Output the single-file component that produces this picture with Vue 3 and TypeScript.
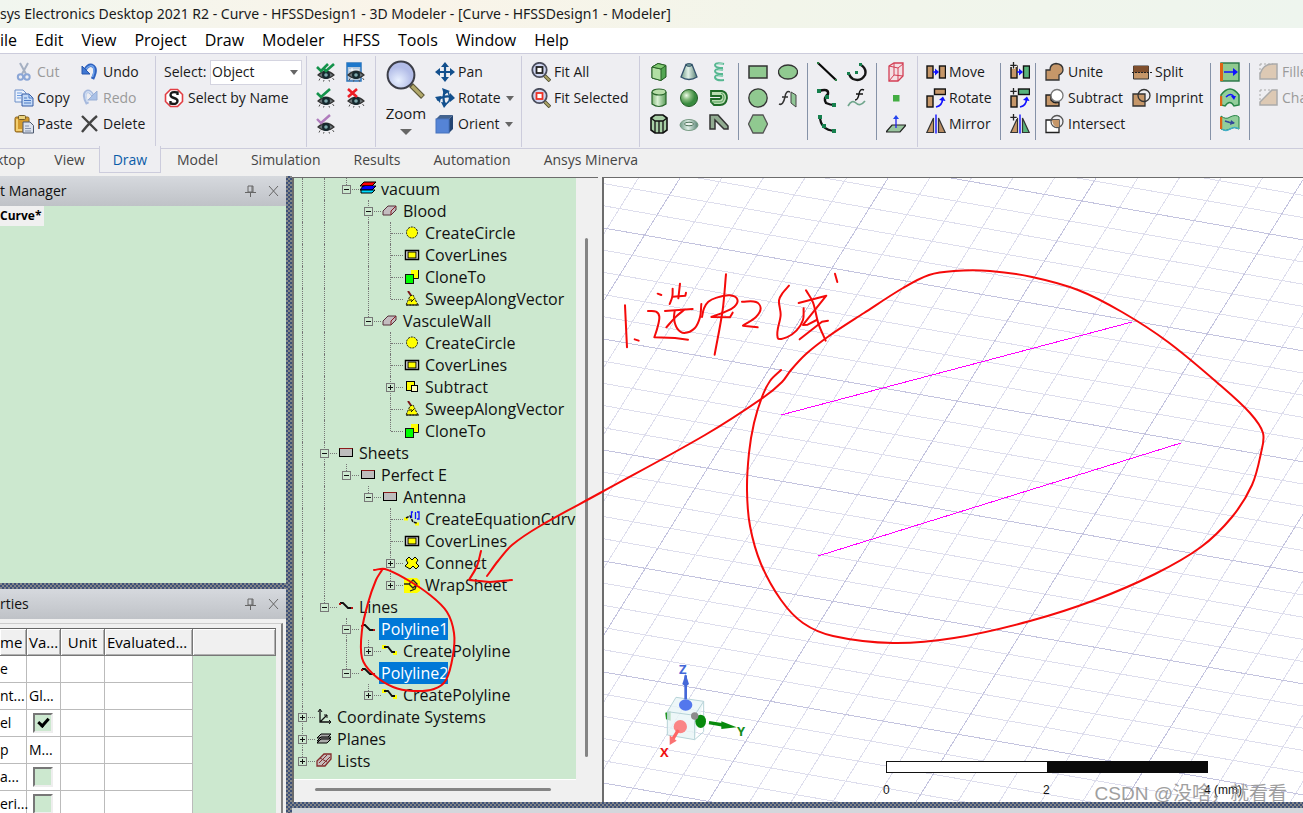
<script setup lang="ts">
type Pt = [number, number]

const menus: string[] = ['ile', 'Edit', 'View', 'Project', 'Draw', 'Modeler', 'HFSS', 'Tools', 'Window', 'Help']
const tabs: string[] = ['ktop', 'View', 'Draw', 'Model', 'Simulation', 'Results', 'Automation', 'Ansys Minerva']

const eye = '<path d="M2 13Q10 5.500 18 13Q10 20 2 13Z" fill="#6c7478" stroke="#333" stroke-width="1.200"/><circle cx="10" cy="13" r="4" fill="#16282e"/><circle cx="10" cy="13" r="1.800" fill="#7fa9ad"/><path d="M4 16.500L3 18.500M8 18L7.500 19.500M13 18L13.500 19.500M16.500 16L18 18" stroke="#555"/>'
const lens = (c: string) => `<path d="M13 13L19 19" stroke="#4d4a2c" stroke-width="3.600"/><path d="M13 13L18.500 18.500" stroke="#aca468" stroke-width="1.800"/><circle cx="8.500" cy="8" r="7.200" fill="#cfd6f2" stroke="#4a4d5c" stroke-width="1.800"/><rect x="5.500" y="5" width="6" height="6" fill="#fff" stroke="${c}" stroke-width="1.800"/>`
const move = (c: string) => `<rect x="1" y="4" width="6" height="12" fill="#c69769" stroke="#111" stroke-width="1.400"/><rect x="13.500" y="4" width="6" height="12" fill="${c}" stroke="#111" stroke-width="1.400"/><path d="M7 10H11" stroke="#11f" stroke-width="1.500"/><path d="M9 6.500L13 10L9 13.500Z" fill="#11f"/>`
const rot = (c: string) => `<rect x="1" y="8" width="6" height="11" fill="#c69769" stroke="#111" stroke-width="1.400"/><rect x="8.500" y="1" width="11" height="5.500" fill="${c}" stroke="#111" stroke-width="1.400"/><path d="M10 19Q16.500 17.500 16.500 11" fill="none" stroke="#11f" stroke-width="1.700"/><path d="M13 12L17 8.500L19.500 13Z" fill="#11f"/>`
const mir = (c: string) => `<path d="M7.500 4V18.500H.8Z" fill="#c69769" stroke="#333" stroke-width="1.200"/><path d="M12.500 4V18.500H19.200Z" fill="${c}" stroke="#333" stroke-width="1.200"/><path d="M10 .5V19.500" stroke="#11f" stroke-width="1.400"/>`
const plus = '<path d="M3.500 0V7M0 3.500H7" stroke="#eeeef2" stroke-width="3"/><path d="M3.500 0V6.500M.3 3.300H6.700" stroke="#222" stroke-width="1.300"/>'

const icons: Record<string, string> = {
  cut: '<path d="M6 1L12 12M14 1L8 12" stroke="#a5b0c2" stroke-width="2"/><circle cx="6.500" cy="15" r="2.700" fill="none" stroke="#8ba6d6" stroke-width="2"/><circle cx="13" cy="15" r="2.700" fill="none" stroke="#8ba6d6" stroke-width="2"/>',
  copy: '<path d="M1 2H9L12 5V14H1Z" fill="#eaf1fc" stroke="#6c8fc8"/><path d="M3 5H8M3 7.500H8M3 10H7" stroke="#6c9be0"/><path d="M8 6H15L19 10V18H8Z" fill="#c4daf7" stroke="#375da5"/><path d="M15 6V10H19M10 10H13M10 12.500H17M10 15H17" fill="none" stroke="#4f7cc6"/>',
  paste: '<rect x="1" y="3" width="14" height="15" rx="1.500" fill="#d39a2e" stroke="#8a641e"/><path d="M3 5V16H8" fill="none" stroke="#f4cf70" stroke-width="2"/><rect x="4.500" y="1.500" width="7" height="4" rx="1" fill="#ecd37d" stroke="#705b2c"/><path d="M9 8H16L19.500 11.500V19H9Z" fill="#dce2ed" stroke="#4d596f"/><path d="M11 12H15M11 14.500H17M11 17H17" stroke="#8592ad"/>',
  undo: '<path d="M5 8Q8 2.500 12 3.500Q18 6 12.500 17" fill="none" stroke="#2f62bf" stroke-width="3.500"/><path d="M6 7Q9 3 12 4Q16 6 12.500 15" fill="none" stroke="#72a5ee" stroke-width="1.500"/><path d="M2 4V12H10Z" fill="#3f77d2" stroke="#2857ae"/>',
  redo: '<path d="M13 8Q10 2.500 7 3.500Q2 6 7.500 16" fill="none" stroke="#a6b9dd" stroke-width="3.500"/><path d="M12 7Q10 3 7 4Q4 6 7.500 14" fill="none" stroke="#d0def3" stroke-width="1.500"/><path d="M17 3V12H8Z" fill="#abc2e8" stroke="#99afd5"/>',
  del: '<path d="M2 2Q8 8 17 17M17 2Q11 7 2 18" fill="none" stroke="#444" stroke-width="2.400"/>',
  sel: '<path d="M6.500 1.500H13.500L18.500 6.500V13.500L13.500 18.500H6.500L1.500 13.500V6.500Z" fill="#fff" stroke="#e23d43" stroke-width="1.600"/><path d="M13.500 7V4.500Q6.500 3 6.500 7Q6.500 9 10 10Q13.500 11 13.500 13Q13.500 17 6.500 15.500V13" fill="none" stroke="#181818" stroke-width="2.400"/>',
  eye2: eye + '<path d="M1 5L5 9L12 2M8 7L10 9L18 2" fill="none" stroke="#14934b" stroke-width="2.600"/>',
  eye1: eye + '<path d="M1 5L5 9L14 1" fill="none" stroke="#14934b" stroke-width="2.600"/>',
  eye0: eye + '<path d="M1 5L5 9L14 1" fill="none" stroke="#b07cbd" stroke-width="2.400"/>',
  eyeWin: '<rect x="1" y="1" width="14" height="18" fill="#b7c9dc" stroke="#2d75bb" stroke-width="1.500"/><path d="M1 3H15" stroke="#1d77cb" stroke-width="4"/><path d="M3 8H13M6 6V17" stroke="#fff"/>' + eye,
  eyeX: eye + '<path d="M2 1L11 9M11 1L2 9" stroke="#ed1c24" stroke-width="2.600"/>',
  pan: '<path d="M10 2V18M2 10H18" stroke="#124f8d" stroke-width="2.200"/><path d="M10 0L14 5H6ZM10 20L14 15H6ZM0 10L5 6V14ZM20 10L15 6V14Z" fill="#124f8d"/>',
  rotate: '<path d="M10 3Q7 10 10 17M2 12Q9 7 17 9" fill="none" stroke="#124f8d" stroke-width="2.200"/><path d="M7 0L15 3L9 7ZM6 14L13 15L9 20ZM0 9L6 8L5 15ZM20 10L15 5V14Z" fill="#124f8d"/><path d="M13 4Q17 12 12 15" fill="none" stroke="#124f8d" stroke-width="1.600"/>',
  orient: '<path d="M1 5L5 1H18L14 5Z" fill="#42628e"/><path d="M14 5L18 1V15L14 19Z" fill="#234473"/><rect x="1" y="5" width="13" height="14" fill="#5584d6" stroke="#4772bd"/>',
  zoom: '<path d="M12.500 12.500L18.500 18.500" stroke="#5b5637" stroke-width="2.700"/><path d="M13 13L18.200 18.200" stroke="#b1a86b" stroke-width="1.600"/><circle cx="7.500" cy="7.500" r="6.700" fill="url(#lensGlass)" stroke="#3c3e48" stroke-width="1"/>',
  fitAll: lens('#222'), fitSel: lens('#ed3023'),
  box: '<path d="M3 5L9 1.500L17 3.500V15L12 18.500L3 16Z" fill="#53a653" stroke="#1c521c"/><path d="M3 5L12 7V18.500L3 16Z" fill="#b2dfa4" stroke="#286328"/><path d="M3 5L9 1.500L17 3.500L12 7Z" fill="#83ca74" stroke="#286328"/>',
  cone: '<path d="M7 2.500H13L18 15Q10 20 2 15Z" fill="url(#steel)" stroke="#35536e" stroke-width="1.300"/><ellipse cx="10" cy="3" rx="3" ry="1.300" fill="#79a4a2" stroke="#294a60"/>',
  helix: '<path d="M15 2Q7 0 6 3Q6 6 14 6M14 8Q7 6 6 9Q6 12 14 12M14 14Q7 12 6 15Q6 19 15 18" fill="none" stroke="#56b791" stroke-width="2"/><path d="M7 3Q10 1 14 2M7 9Q10 7 14 8M7 15Q10 13 14 14" fill="none" stroke="#b3e2cf"/>',
  cylinder: '<path d="M3 4V16Q10 21 17 16V4" fill="url(#greenTube)" stroke="#29652b" stroke-width="1.200"/><ellipse cx="10" cy="4" rx="7" ry="3" fill="#b7dda8" stroke="#29652b" stroke-width="1.200"/>',
  sphere: '<circle cx="10" cy="10" r="8.500" fill="url(#ball)" stroke="#235e27"/>',
  wire: '<path d="M2 3H13Q18 4 18 10Q17 17 11 17H5L2 14V11H11Q13 10 12 8H2Z" fill="#b9dcb2" stroke="#1f6b28" stroke-width="1.800"/><path d="M2 14H11Q15 14 15 9Q15 6 12 5" fill="none" stroke="#4f9d55"/>',
  prism: '<path d="M2 4L6 1H14L18 4V16L14 19H6L2 16Z" fill="#a8cfa6" stroke="#111" stroke-width="1.600"/><path d="M2 4L6 7H14L18 4M6 7V19M10 7V19M14 7V19" fill="none" stroke="#111" stroke-width="1.300"/>',
  torus: '<ellipse cx="10" cy="11" rx="9" ry="5.500" fill="url(#steel)" stroke="#779b84"/><ellipse cx="10" cy="10" rx="4.500" ry="1.800" fill="#eef4ef" stroke="#4d7159"/>',
  bend: '<path d="M1 1H9L19 12V15H15L6 6V15H1Z" fill="#91ab91" stroke="#333" stroke-width="1.500"/>',
  rect: '<rect x="1" y="4" width="18" height="12" fill="#90c990" stroke="#333" stroke-width="1.500"/>',
  ellipse: '<ellipse cx="10" cy="10" rx="9.500" ry="7" fill="#90c990" stroke="#333" stroke-width="1.300"/>',
  circle: '<circle cx="10" cy="10" r="9.200" fill="#90c990" stroke="#333" stroke-width="1.300"/>',
  fx: '<path d="M1 16Q5 18 7 9Q8 2 12 4M4 9H10" fill="none" stroke="#333" stroke-width="1.500"/><path d="M13 4L18 7V19L13 15Z" fill="#91c797" stroke="#444"/>',
  hexagon: '<path d="M5 1H15L19.500 10L15 19H5L.5 10Z" fill="#90c990" stroke="#555" stroke-width="1.300"/>',
  line: '<path d="M1 1L19 18" stroke="#080808" stroke-width="2.200"/><path d="M0 0H2V2H0ZM18 17H20V19H18Z" fill="#267c40"/>',
  arc: '<path d="M14 3Q20 7 18 13Q14 20 6 17Q3 15 2 12" fill="none" stroke="#151515" stroke-width="2.400"/><path d="M12 1H15V4H12ZM8 9H11V12H8ZM0 10H3V13H0Z" fill="#16804e"/>',
  spline: '<path d="M2 3Q12 0 11 6Q6 10 9 15Q13 17 18 17" fill="none" stroke="#111" stroke-width="2.400"/><path d="M0 1H4V5H0ZM8 7H12V11H8ZM15 15H19V19H15Z" fill="#16804e"/>',
  fcurve: '<path d="M8 12Q11 12 12 6Q13 0 17 2M9 6H16" fill="none" stroke="#151515" stroke-width="1.500"/><path d="M1 18Q5 11 9 15Q13 19 18 13" fill="none" stroke="#6fa58c" stroke-width="1.700"/>',
  arc3: '<path d="M3 2Q3 16 18 17" fill="none" stroke="#111" stroke-width="2.200"/><path d="M1 1H5V5H1ZM5 10H9V14H5ZM15 15H19V19H15Z" fill="#16804e"/>',
  region: '<path d="M3 4L8 1H17V14L12 19H3Z" fill="#f4dfe4" stroke="#d33e54" stroke-width="1.300"/><path d="M3 4L12 6L17 2M12 6V19M8 1V13L3 19M8 13L17 14" fill="none" stroke="#d33e54"/>',
  point: '<rect x="7" y="7" width="6.500" height="6.500" fill="#43ad43"/>',
  plane: '<path d="M6 11H20L14 18H0Z" fill="#9ac6a0" stroke="#222" stroke-width="1.200"/><path d="M10 14V3" stroke="#2222ee" stroke-width="1.300"/><path d="M7 5L10 1L13 5Z" fill="#2244ee"/>',
  move: move('#c69769'), rot: rot('#c69769'), mir: mir('#b98c62'),
  moveC: move('#58b47c') + plus, rotC: rot('#58b47c') + plus, mirC: mir('#58b47c') + plus,
  unite: '<path d="M1 8H5Q5 2 11 1.500Q18 2 18 8Q18 11 14 13V18H1Z" fill="#c69769" stroke="#333" stroke-width="1.300"/>',
  subtract: '<path d="M1 7H6V12Q9 16 14 14V18H1Z" fill="#c69769" stroke="#222" stroke-width="1.400"/><circle cx="12" cy="7.500" r="6" fill="#fff" stroke="#777" stroke-width="1.300"/>',
  intersect: '<path d="M1 6H14V18.500H1Z" fill="#fff" stroke="#222" stroke-width="1.300"/><circle cx="12" cy="7.500" r="6" fill="none" stroke="#555" stroke-width="1.300"/><path d="M7 6H14V13Q8 14 7 6Z" fill="#c69769"/>',
  split: '<path d="M1.500 4H16.500V17H1.500Z" fill="#c69769" stroke="#333"/><path d="M1.500 4H16.500V10.500H1.500Z" fill="#804f2d"/><path d="M0 10.500H20" stroke="#222" stroke-width="1.200" stroke-dasharray="2 1"/>',
  imprint: '<path d="M1 6H13V18H1Z" fill="#c69769" stroke="#333" stroke-width="1.300"/><circle cx="12" cy="7.500" r="6" fill="none" stroke="#333" stroke-width="1.300"/>',
  surf1: '<rect x="1" y="1" width="18" height="18" fill="#8fc98f" stroke="#257345" stroke-width="1.400"/><rect x="0" y="1" width="3" height="18" fill="#dd6414"/><path d="M4 10H15" stroke="#11f" stroke-width="1.500"/><path d="M13 6L18 10L13 14Z" fill="#11f"/>',
  surf2: '<path d="M1 7Q10 -5 19 7V17L14 18Q10 11 5 18L1 17Z" fill="#92ce9b" stroke="#278447" stroke-width="1.500"/><path d="M1 8V18" stroke="#dd6414" stroke-width="2.500"/><path d="M6 9Q11 4 14 9" fill="none" stroke="#11f" stroke-width="1.500"/><path d="M11 8H16L14 12Z" fill="#11f"/>',
  surf3: '<path d="M1 2Q6 6 10 3Q16 0 19 3V15Q14 12 10 15Q5 18 1 15Z" fill="#92ce9b" stroke="#278447"/><path d="M1 3V15" stroke="#dd6414" stroke-width="2.500"/><path d="M2 15Q6 18 10 15Q15 12 19 15" fill="none" stroke="#40aeca" stroke-width="1.500"/><path d="M5 7Q10 9 14 9" stroke="#33499b" stroke-width="1.500"/><path d="M11 6L15 9L10 11Z" fill="#33499b"/>',
  fillet: '<path d="M1 17V12Q4 2 14 2H18V17Z" fill="#ddc9b4" stroke="#aaa" stroke-width="1.500"/><path d="M1 2H14M1 2V12" stroke="#aaa" stroke-dasharray="2 2"/>',
  chamfer: '<path d="M1 17V14L13 2H18V17Z" fill="#ddc9b4" stroke="#aaa" stroke-width="1.500"/><path d="M1 2H12M1 2V13" stroke="#aaa" stroke-dasharray="2 2"/>',
}

interface Item { icon: string; label?: string; off?: boolean; drop?: boolean }
interface Group { id: string; sep: 'light' | 'dark' | 'none'; cols: Item[][] }
const i = (icon: string, label?: string, off = false, drop = false): Item => ({ icon, label, off, drop })
const clip: Group = { id: 'clip', sep: 'light', cols: [[i('cut', 'Cut', true), i('copy', 'Copy'), i('paste', 'Paste')], [i('undo', 'Undo'), i('redo', 'Redo', true), i('del', 'Delete')]] }
const eyes: Group = { id: 'eyes', sep: 'light', cols: [[i('eye2'), i('eye1'), i('eye0')], [i('eyeWin'), i('eyeX')]] }
const view: Item[] = [i('pan', 'Pan'), i('rotate', 'Rotate', false, true), i('orient', 'Orient', false, true)]
const groups: Group[] = [
  { id: 'fit', sep: 'light', cols: [[i('fitAll', 'Fit All'), i('fitSel', 'Fit Selected')]] },
  { id: 'solid', sep: 'dark', cols: [[i('box'), i('cylinder'), i('prism')], [i('cone'), i('sphere'), i('torus')], [i('helix'), i('wire'), i('bend')]] },
  { id: 'sheet', sep: 'dark', cols: [[i('rect'), i('circle'), i('hexagon')], [i('ellipse'), i('fx')]] },
  { id: 'curve', sep: 'dark', cols: [[i('line'), i('spline'), i('arc3')], [i('arc'), i('fcurve')]] },
  { id: 'misc', sep: 'light', cols: [[i('region'), i('point'), i('plane')]] },
  { id: 'move', sep: 'dark', cols: [[i('move', 'Move'), i('rot', 'Rotate'), i('mir', 'Mirror')]] },
  { id: 'dup', sep: 'dark', cols: [[i('moveC'), i('rotC'), i('mirC')]] },
  { id: 'bool', sep: 'dark', cols: [[i('unite', 'Unite'), i('subtract', 'Subtract'), i('intersect', 'Intersect')], [i('split', 'Split'), i('imprint', 'Imprint')]] },
  { id: 'surf', sep: 'dark', cols: [[i('surf1'), i('surf2'), i('surf3')]] },
  { id: 'edge', sep: 'none', cols: [[i('fillet', 'Fillet', true), i('chamfer', 'Chamfer', true)]] },
]

const treeIcons: Record<string, string> = {
  mat: '<path d="M4 1H16L12 5H0Z" fill="#f00" stroke="#000"/><path d="M3 5H16L12 9H0Z" fill="#00f" stroke="#000"/><path d="M1 9H15L12 12H1Z" fill="#0df" stroke="#000"/><path d="M5 5H14L11 8H2Z" fill="#00f"/>',
  solid: '<path d="M1 8L6 3H14V7L9 12H1Z" fill="#c4bcc0" stroke="#55303a"/><path d="M9 8V12M14 3L9 8" stroke="#8c1c22"/>',
  circ: '<circle cx="8" cy="7.500" r="5.500" fill="#ff0" stroke="#111" stroke-dasharray="2 1"/>',
  cover: '<rect x="1.500" y="3.500" width="13" height="9" fill="#fff" stroke="#000" stroke-width="1.500"/><rect x="4" y="5" width="8" height="6" fill="#ff0" stroke="#000"/>',
  clone: '<rect x="7" y="1" width="8" height="9" fill="#ff0"/><path d="M14.500 1V9.500H10" fill="none" stroke="#111"/><rect x="1.500" y="5.500" width="8" height="9" fill="#0f0" stroke="#111"/>',
  sweep: '<path d="M4 0L8 6" stroke="#7a1518" stroke-width="2"/><path d="M6 5L9 4L14 14H2Z" fill="#ff0" stroke="#111" stroke-dasharray="2 1"/><path d="M5 9H8M7 11L10 8M2 14H15" stroke="#111"/>',
  sub: '<rect x="2.500" y="2.500" width="8" height="9" fill="#ff0" stroke="#000"/><rect x="7.500" y="6.500" width="6" height="6" fill="#fafac0" stroke="#000"/>',
  sheet: '<rect x="1.500" y="3.500" width="13" height="8" fill="#bdbdbd" stroke="#000"/><path d="M1.500 3.500H14.500" stroke="#8d1c1c"/>',
  eq: '<path d="M0 8H4M11 13H15" stroke="#ff0" stroke-width="3"/><path d="M2 7L6 5L9 11L13 12" fill="none" stroke="#111" stroke-width="1.500" stroke-dasharray="3 1"/><path d="M9 1H7.500V7M11.500 1V8M13 1H15V8H13" fill="none" stroke="#11f" stroke-width="1.300"/>',
  connect: '<path d="M2 5L5 2L8 5L11 2L14 5L12 8L15 11L12 14L9 11L6 14L1 11L4 8Z" fill="#ff0" stroke="#000"/>',
  wrap: '<path d="M0 1H13L16 4V14L13 16H0Z" fill="#ff0"/><path d="M0 7H5L9 3L13 7L11 12L6 14M5 7L9 11L13 7" fill="none" stroke="#222" stroke-width="1.300"/>',
  line: '<path d="M2 4H5L10 9H13" fill="none" stroke="#111" stroke-width="1.800"/><path d="M1 5H3M13 9H15" stroke="#b11" stroke-width="2"/>',
  pline: '<path d="M0 4H4M11 10H15" stroke="#ff0" stroke-width="4"/><path d="M2 4H6L10 9H13" fill="none" stroke="#111" stroke-width="1.800"/>',
  cs: '<path d="M4 1V13H15M4 13L11 6" fill="none" stroke="#111" stroke-width="1.300"/><path d="M2 3L4 0L6 3M13 11L15 13L13 15M8 6H11V9" fill="none" stroke="#111"/>',
  planes: '<path d="M5 3H15L11 7H1Z" fill="#aaa" stroke="#000"/><path d="M5 6H15L11 10H1Z" fill="#888" stroke="#000"/><path d="M5 8H15L11 12H1Z" fill="#aaa" stroke="#000"/>',
  lists: '<path d="M1 8L8 1H15V6L9 13H1Z" fill="#c7bcbc" stroke="#842c2c" stroke-width="1.300"/><path d="M3 10L11 2M6 12L14 4M4 5L11 9" stroke="#842c2c"/>',
}
/* rails: one character per ancestor level ("|" draws a rail), then the node's own joint (T continues, L ends) */
interface Node { rails: string; box: '' | '+' | '-'; icon: string; text: string; sel?: boolean }
const n = (rails: string, box: '' | '+' | '-', icon: string, text: string, sel = false): Node => ({ rails, box, icon, text, sel })
const tree: Node[] = [
  n('||L', '-', 'mat', 'vacuum'),
  n('|| T', '-', 'solid', 'Blood'),
  n('|| |T', '', 'circ', 'CreateCircle'),
  n('|| |T', '', 'cover', 'CoverLines'),
  n('|| |T', '', 'clone', 'CloneTo'),
  n('|| |L', '', 'sweep', 'SweepAlongVector'),
  n('|| L', '-', 'solid', 'VasculeWall'),
  n('||  T', '', 'circ', 'CreateCircle'),
  n('||  T', '', 'cover', 'CoverLines'),
  n('||  T', '+', 'sub', 'Subtract'),
  n('||  T', '', 'sweep', 'SweepAlongVector'),
  n('||  L', '', 'clone', 'CloneTo'),
  n('|T', '-', 'sheet', 'Sheets'),
  n('||L', '-', 'sheet', 'Perfect E'),
  n('|| L', '-', 'sheet', 'Antenna'),
  n('||  T', '', 'eq', 'CreateEquationCurve'),
  n('||  T', '', 'cover', 'CoverLines'),
  n('||  T', '+', 'connect', 'Connect'),
  n('||  L', '+', 'wrap', 'WrapSheet'),
  n('|L', '-', 'line', 'Lines'),
  n('| T', '-', 'line', 'Polyline1', true),
  n('| |L', '+', 'pline', 'CreatePolyline'),
  n('| L', '-', 'line', 'Polyline2', true),
  n('|  L', '+', 'pline', 'CreatePolyline'),
  n('T', '+', 'cs', 'Coordinate Systems'),
  n('T', '+', 'planes', 'Planes'),
  n('L', '+', 'lists', 'Lists'),
]
const railClass = (c: string): string => (c === '|' ? 'rail' : c === 'T' ? 'rail joint' : c === 'L' ? 'end joint' : '')

interface Prop { name: string; value?: string; check?: boolean }
const props: Prop[] = [
  { name: 'e' }, { name: 'nt...', value: 'Gl...' }, { name: 'el', check: true },
  { name: 'p', value: 'M...' }, { name: 'a...', check: false }, { name: 'eri...', check: false },
]

/* drawing grid: two families of parallel lines, every fifth one darker */
interface Seg { x1: number; y1: number; x2: number; y2: number; major: boolean }
const grid: Seg[] = []
for (let k = -70; k < 60; k++) {
  const y = 233 + k * 22.2
  grid.push({ x1: 0, y1: y, x2: 2600, y2: y + 2600 * 0.1756, major: k % 5 === 0 })
}
for (let k = -20; k < 90; k++) {
  const x = 122 + k * 41.6
  grid.push({ x1: x, y1: 72, x2: x - 1600 * 0.622, y2: 1672, major: k % 5 === 0 })
}
grid.sort((a, b) => Number(a.major) - Number(b.major))

/* curve through points; each handle follows the chord of its neighbours, scaled to its own segment */
function smooth(p: Pt[]): string {
  const dir = (k: number): Pt => {
    const a = p[Math.max(k - 1, 0)], b = p[Math.min(k + 1, p.length - 1)]
    const len = Math.hypot(b[0] - a[0], b[1] - a[1]) || 1
    return [(b[0] - a[0]) / len, (b[1] - a[1]) / len]
  }
  let d = `M${p[0][0]} ${p[0][1]}`
  for (let k = 0; k < p.length - 1; k++) {
    const b = p[k], c = p[k + 1], u = dir(k), v = dir(k + 1)
    const h = Math.hypot(c[0] - b[0], c[1] - b[1]) / 3
    d += `C${b[0] + u[0] * h} ${b[1] + u[1] * h} ${c[0] - v[0] * h} ${c[1] - v[1] * h} ${c[0]} ${c[1]}`
  }
  return d
}
const ink: string[] = [
  smooth([[781, 370], [770, 381], [762, 397], [754, 423], [749, 453], [747, 490], [750, 526], [761, 564], [781, 600], [803, 623], [833, 636], [893, 643], [954, 638], [1030, 621], [1095, 600], [1155, 574], [1201, 547], [1232, 517], [1252, 485], [1261, 453], [1263, 433], [1250, 413], [1220, 385], [1168, 342], [1122, 312], [1078, 290], [1032, 277], [990, 271], [954, 271], [929, 275], [903, 288], [864, 313], [829, 336], [806, 354], [791, 370], [782, 382], [764, 397], [705, 435], [600, 493], [540, 526], [512, 545], [498, 561], [487, 576]]),
  smooth([[481, 551], [477, 566], [469, 580]]) + 'L490 582L512 580',
  smooth([[374, 570], [385, 569], [406, 579], [430, 595], [447, 612], [454, 633], [453, 655], [446, 680], [434, 689], [413, 691], [393, 687], [373, 674], [362, 658], [362, 630], [368, 603], [376, 580], [382, 570]]),
]
const script: string[] = [
  smooth([[75, 136], [78, 200], [81, 262]]), 'M104 238L116 242', 'M173 101L184 105',
  smooth([[144, 153], [168, 155], [178, 170], [172, 204], [163, 232]]) + 'L225 234L264 239',
  smooth([[218, 86], [217, 110], [209, 132]]), 'M240 71L235 115', 'M218 110L256 107L258 98', 'M195 153L278 147',
  smooth([[251, 151], [228, 170], [199, 202]]),
  smooth([[224, 153], [222, 176], [232, 206], [253, 219], [284, 205], [300, 172], [304, 132]]),
  smooth([[306, 171], [312, 145], [325, 125], [350, 113], [389, 106], [412, 118], [403, 140], [370, 158]]) + 'L334 171L390 172L398 158',
  smooth([[378, 43], [368, 150], [344, 284]]),
  smooth([[426, 125], [468, 126], [482, 145], [468, 171], [429, 197]]) + 'L473 202',
  smooth([[567, 77], [548, 99], [537, 121], [542, 164], [533, 233], [560, 232], [590, 211], [609, 180], [611, 145]]),
  smooth([[618, 91], [639, 127], [655, 190], [677, 242]]), 'M596 129L679 107L609 195L623 194L650 180', 'M599 238L666 185L684 182', 'M705 41L712 66',
]
</script>

<template>
  <div class="app">
    <svg class="defs" aria-hidden="true">
      <defs>
        <radialGradient id="lensGlass" cx=".4" cy=".7"><stop offset="0" stop-color="#e9f1ff" /><stop offset="1" stop-color="#b3bde8" /></radialGradient>
        <radialGradient id="ball" cx=".35" cy=".35"><stop offset="0" stop-color="#effbe9" /><stop offset=".5" stop-color="#84ba7c" /><stop offset="1" stop-color="#398a3f" /></radialGradient>
        <linearGradient id="greenTube"><stop offset="0" stop-color="#82b678" /><stop offset=".4" stop-color="#dbf1d5" /><stop offset="1" stop-color="#599c57" /></linearGradient>
        <linearGradient id="steel"><stop offset="0" stop-color="#6f9a86" /><stop offset=".45" stop-color="#e2f1e8" /><stop offset="1" stop-color="#568073" /></linearGradient>
      </defs>
    </svg>
    <header class="title">sys Electronics Desktop 2021 R2 - Curve - HFSSDesign1 - 3D Modeler - [Curve - HFSSDesign1 - Modeler]</header>
    <nav class="menu"><button v-for="m in menus" :key="m">{{ m }}</button></nav>

    <section class="ribbon">
      <div class="group light clip">
        <div v-for="(c, ci) in clip.cols" :key="ci" class="col">
          <button v-for="it in c" :key="it.icon" class="tool" :disabled="it.off">
            <svg viewBox="0 0 20 20" v-html="icons[it.icon]" /><span>{{ it.label }}</span>
          </button>
        </div>
      </div>
      <div class="group light select">
        <div class="pick">
          <label for="mode">Select:</label>
          <div class="combo"><select id="mode"><option>Object</option></select><i class="arrow" /></div>
        </div>
        <button class="tool"><svg viewBox="0 0 20 20" v-html="icons.sel" /><span>Select by Name</span></button>
      </div>
      <div class="group light eyes">
        <div v-for="(c, ci) in eyes.cols" :key="ci" class="col">
          <button v-for="it in c" :key="it.icon" class="tool" :aria-label="it.icon"><svg viewBox="0 0 20 20" v-html="icons[it.icon]" /></button>
        </div>
      </div>
      <div class="group light view">
        <button class="big"><svg viewBox="0 0 20 20" v-html="icons.zoom" /><span>Zoom</span><i class="arrow wide" /></button>
        <div class="col">
          <button v-for="it in view" :key="it.icon" class="tool">
            <svg viewBox="0 0 20 20" v-html="icons[it.icon]" /><span>{{ it.label }}</span><i v-if="it.drop" class="arrow" />
          </button>
        </div>
      </div>
      <div v-for="g in groups" :key="g.id" class="group" :class="[g.id, g.sep]">
        <div v-for="(c, ci) in g.cols" :key="ci" class="col">
          <button v-for="it in c" :key="it.icon" class="tool" :disabled="it.off" :aria-label="it.label || it.icon">
            <svg viewBox="0 0 20 20" v-html="icons[it.icon]" /><span v-if="it.label">{{ it.label }}</span>
          </button>
        </div>
      </div>
    </section>
    <nav class="tabs"><button v-for="t in tabs" :key="t" :class="{ on: t === 'Draw' }">{{ t }}</button></nav>

    <main class="work">
      <aside class="side">
        <section class="manager">
          <h2 class="cap"><span>t Manager</span>
            <button aria-label="Pin"><svg viewBox="0 0 11 14"><path d="M3 2H8V8H3ZM7 2V8M0 8.500H11M5.500 8V13" /></svg></button>
            <button aria-label="Close"><svg viewBox="0 0 11 14"><path d="M1 2L10 12M10 2L1 12" /></svg></button>
          </h2>
          <div class="project"><b>Curve*</b></div>
        </section>
        <div class="split" />
        <section class="properties">
          <h2 class="cap"><span>rties</span>
            <button aria-label="Pin"><svg viewBox="0 0 11 14"><path d="M3 2H8V8H3ZM7 2V8M0 8.500H11M5.500 8V13" /></svg></button>
            <button aria-label="Close"><svg viewBox="0 0 11 14"><path d="M1 2L10 12M10 2L1 12" /></svg></button>
          </h2>
          <div class="frame">
            <table>
              <colgroup><col class="c1"><col class="c2"><col class="c3"><col class="c4"><col></colgroup>
              <thead><tr><th>me</th><th>Va...</th><th class="mid">Unit</th><th>Evaluated...</th><th /></tr></thead>
              <tbody>
                <tr v-for="p in props" :key="p.name">
                  <td>{{ p.name }}</td>
                  <td><input v-if="p.check !== undefined" type="checkbox" :checked="p.check" :aria-label="p.name"><template v-else>{{ p.value }}</template></td>
                  <td /><td /><td class="blank" />
                </tr>
              </tbody>
            </table>
          </div>
        </section>
      </aside>
      <div class="split tall" />
      <div class="right">
        <div class="panes">
          <section class="treebox">
            <div class="tree">
              <div v-for="(r, ri) in tree" :key="ri" class="row">
                <span v-for="(c, ci) in r.rails.split('')" :key="ci" class="cell" :class="railClass(c)">
                  <i v-if="r.box && ci === r.rails.length - 1" class="exp" :class="{ more: r.box === '+' }" />
                </span>
                <svg viewBox="0 0 16 16" v-html="treeIcons[r.icon]" />
                <span class="name" :class="{ sel: r.sel }">{{ r.text }}</span>
              </div>
            </div>
            <div class="vbar"><i /></div>
            <div class="hbar"><i /></div>
          </section>
          <section class="canvas">
            <svg class="scene">
              <g transform="translate(-604 -178)">
                <line v-for="(s, k) in grid" :key="k" :x1="s.x1" :y1="s.y1" :x2="s.x2" :y2="s.y2" :class="s.major ? 'major' : 'minor'" />
                <path class="poly" d="M781 415L1132 322M818 556L1181 443" />
                <g transform="translate(640 640) scale(.3333)">
                  <path d="M76 218L92 214V242L78 238Z" fill="#080" />
                  <path d="M108 172L191 184L163 299L82 285V215Z" fill="#e8f5f6" opacity=".8" />
                  <path d="M82 215L164 226V299L82 285ZM82 215L108 172L191 184L164 226M191 184V275L164 299" fill="none" stroke="#b7d3d8" stroke-width="3" />
                  <ellipse cx="182" cy="244" rx="16" ry="20" fill="#078a0d" />
                  <path d="M207 248L250 255" stroke="#078a0d" stroke-width="10" /><path d="M244 244L290 262L244 267Z" fill="#078a0d" />
                  <path d="M137 106V178" stroke="#4568d8" stroke-width="8" /><path d="M137 102L147 132Q137 144 127 132Z" fill="#4568d8" />
                  <ellipse cx="137" cy="195" rx="20" ry="17" fill="#5377ed" />
                  <circle cx="164" cy="228" r="11" fill="#8c8c8c" />
                  <circle cx="121" cy="260" r="20" fill="#fa8585" />
                  <path d="M115 270L98 298" stroke="#f66" stroke-width="10" /><path d="M89 315V286L110 302Z" fill="#fa7272" />
                </g>
                <text class="axis z" x="679" y="674">Z</text><text class="axis y" x="737" y="736">Y</text><text class="axis x" x="660" y="757">X</text>
                <rect x="886.5" y="761.5" width="321" height="11" fill="#fff" stroke="#111" />
                <rect x="1047" y="761" width="161" height="12" fill="#0a0a0a" />
                <text class="num" x="883" y="794">0</text><text class="num" x="1043" y="794">2</text><text class="num" x="1204" y="794">4 (mm)</text>
              </g>
            </svg>
            <div class="mark">CSDN @没啥，就看看</div>
          </section>
        </div>
        <div class="split" />
        <div class="foot" />
      </div>
    </main>

    <svg class="ink" aria-hidden="true">
      <path v-for="(d, k) in ink" :key="k" :d="d" />
      <g transform="translate(600 260) scale(.3333)"><path v-for="(d, k) in script" :key="k" :d="d" class="pen" /></g>
    </svg>
  </div>
</template>

<style>
html, body { margin: 0; overflow: hidden; }
</style>

<style scoped>
* { box-sizing: border-box; }
.app { position: relative; display: flex; flex-direction: column; height: 100vh; overflow: hidden; background: #f0f0f0; color: #1a1a1a; font: 14px/20px "Open Sans", "Noto Sans", sans-serif; }
button { padding: 0; border: 0; background: none; color: inherit; font: inherit; white-space: nowrap; }
.defs { position: absolute; width: 0; height: 0; }
.title { flex: none; height: 28px; font: 14px/28px "Noto Sans", "Open Sans", sans-serif; white-space: nowrap; background: linear-gradient(90deg, #f1f6ef, #faf4e9 30%, #f2f5ea 60%, #eef5ee); }
.menu { flex: none; display: flex; align-items: flex-start; gap: 18px; height: 25px; background: #fff; font-size: 16px; line-height: 24px; color: #000; }
.ribbon { flex: none; display: flex; height: 96px; padding-top: 2px; overflow: hidden; background: #eeeef2; border-top: 1px solid #ccccdc; border-bottom: 1px solid #ccccdc; }
.group { position: relative; flex: none; display: flex; gap: 10px; height: 91px; padding: 3px 0 0 9px; }
.light { border-right: 1px solid #ccccdc; }
.dark::after { content: ""; position: absolute; right: 0; top: 7px; width: 1px; height: 77px; background: #8592a8; }
.clip { width: 156px; padding-left: 14px; gap: 6px; }
.clip .col:first-child { width: 60px; }
.select { width: 151px; flex-direction: column; gap: 0; padding-left: 8px; }
.select .tool { gap: 4px; }
.eyes { width: 69px; }
.view { width: 146px; gap: 8px; padding-left: 9px; }
.fit { width: 118px; }
.solid { width: 99px; }
.sheet, .curve { width: 69px; }
.misc { width: 41px; }
.move { width: 83px; padding-left: 8px; }
.dup { width: 35px; }
.bool { width: 175px; gap: 7px; }
.bool .col:first-child { width: 80px; }
.surf { width: 39px; }
.edge { flex: 1 0 60px; }
.tool { display: flex; align-items: center; gap: 3px; height: 26px; }
.tool svg { flex: none; width: 20px; height: 20px; }
.tool:disabled { color: #9a9a9a; }
.arrow { width: 0; height: 0; margin-left: 2px; border: 4px solid transparent; border-top: 5px solid #666; border-bottom: 0; }
.pick { display: flex; align-items: center; height: 26px; font-size: 14px; }
.pick label { width: 46px; }
.combo { position: relative; width: 92px; height: 25px; background: #fff; border: 1px solid #d4d4e0; }
.combo select { width: 100%; height: 100%; padding: 0 1px; border: 0; background: none; appearance: none; color: inherit; font: inherit; }
.combo .arrow { position: absolute; right: 3px; top: 9px; }
.big { display: flex; flex-direction: column; align-items: center; width: 42px; }
.big svg { width: 40px; height: 42px; }
.big span { line-height: 24px; font-size: 15px; }
.wide { margin: 4px 0 0; border-width: 6px 6px 0; }
.tabs { flex: none; display: flex; height: 27px; color: #454545; }
.tabs button { height: 24px; line-height: 20px; margin-right: 33px; padding-bottom: 2px; }
.tabs button:first-child { margin-left: -4px; }
.tabs button:nth-child(2) { margin-left: -4px; }
.tabs .on { position: relative; width: 62px; height: 27px; margin: -3px 16px 0 -19px; padding: 1px 0 0; color: #0a5ca8; background: #eeeef2; border: 1px solid #ccccdc; border-top: 0; }
.work { flex: 1; min-height: 0; display: flex; }
.side { flex: none; width: 286px; display: flex; flex-direction: column; }
.manager { flex: 1; min-height: 0; display: flex; flex-direction: column; }
.properties { flex: none; height: 224px; display: flex; flex-direction: column; }
.cap { flex: none; display: flex; align-items: center; gap: 12px; height: 30px; margin: 0; padding-right: 7px; font-size: 14px; font-weight: 400; color: #111; background: linear-gradient(#d6d9de, #bfc2c7); }
.cap span { flex: 1; }
.cap button { width: 11px; height: 14px; }
.cap svg { display: block; width: 11px; height: 14px; fill: none; stroke: #666; }
.project { flex: 1; background: #cce8cf; }
.project b { display: block; width: 44px; height: 20px; background: #f0f0f0; color: #000; font: bold 12px/20px "Open Sans", sans-serif; }
.split { flex: none; height: 6px; background-color: #848688; background-image: conic-gradient(#3d5078 25%, transparent 0), conic-gradient(#3d5078 25%, transparent 0); background-size: 4px 4px; background-position: 0 0, 2px 2px; }
.tall { width: 6px; height: auto; }
.frame { flex: 1; min-height: 0; margin: 4px 3px 0 0; padding: 4px 5px 0 0; border-top: 1px solid #ccc; border-right: 2px solid #808080; overflow: hidden; background: #f0f0f0; }
table { width: 100%; table-layout: fixed; border-collapse: separate; border-spacing: 0; border-top: 1px solid #666; background: #fff; white-space: nowrap; color: #000; font-size: 14px; }
.c1 { width: 27px; }
.c2 { width: 34px; }
.c3 { width: 44px; }
.c4 { width: 88px; }
th { height: 27px; padding: 0 0 0 2px; font-size: 15px; font-weight: 400; text-align: left; background: #f0f0f0; border-right: 1px solid #777; border-bottom: 1px solid #777; box-shadow: inset 1px 1px #fff, inset -1px -1px #b0b0b0; overflow: hidden; }
th:first-child, td:first-child { padding-left: 0; }
.mid { padding: 0; text-align: center; }
td { height: 27px; padding: 0 0 0 2px; border-right: 1px solid #bbb; border-bottom: 1px solid #bbb; }
.blank { border: 0; background: #cce8cf; }
input { appearance: none; position: relative; display: block; width: 20px; height: 20px; margin: 0 0 0 4px; background: #cce8cf; border: 2px solid; border-color: #777 #eee #eee #777; }
input:checked::after { content: ""; position: absolute; left: 5px; top: 1px; width: 4px; height: 8px; border: solid #000; border-width: 0 3px 3px 0; transform: rotate(42deg); }
.right { flex: 1; min-width: 0; display: flex; flex-direction: column; }
.panes { flex: 1; min-height: 0; display: flex; gap: 4px; }
.foot { height: 5px; background: #d4d7dc; }
.treebox { flex: none; width: 306px; display: grid; grid-template: 1fr 23px / 1fr 22px; margin-top: 1px; border-top: 1px solid #6c6c6c; border-left: 2px solid #6c6c6c; }
.tree { min-height: 0; overflow: hidden; background: #cce8cf; font-size: 16px; color: #111; }
.row { display: flex; align-items: center; height: 22px; white-space: nowrap; }
.row svg { flex: none; width: 16px; height: 16px; }
.cell { flex: none; position: relative; width: 22px; height: 22px; }
.rail::before, .end::before { content: ""; position: absolute; left: 8px; top: 0; height: 22px; border-left: 1px dotted #777; }
.end::before { height: 11px; }
.joint::after { content: ""; position: absolute; left: 9px; top: 11px; width: 12px; border-top: 1px dotted #777; }
.exp { position: absolute; z-index: 1; left: 4px; top: 7px; width: 9px; height: 9px; border: 1px solid #777; background: linear-gradient(#111, #111) center / 5px 1px no-repeat #cce8cf; }
.more { background: linear-gradient(#111, #111) center / 5px 1px no-repeat, linear-gradient(#111, #111) center / 1px 5px no-repeat #cce8cf; }
.name { height: 22px; margin-left: 3px; padding: 0 2px; line-height: 22px; }
.sel { padding-right: 0; background: #0078d7; color: #fff; }
.vbar { padding: 60px 0 22px 9px; }
.vbar i, .hbar i { display: block; width: 3px; height: 100%; border-radius: 2px; background: #858585; }
.hbar { grid-column: 1; padding: 8px 25px 0 21px; border-top: 1px solid #fff; }
.hbar i { width: 100%; height: 3px; }
.canvas { position: relative; flex: 1; min-width: 0; margin-top: 1px; overflow: hidden; background: #fff; border-top: 1px solid #6c6c6c; border-left: 2px solid #6c6c6c; }
.scene { position: absolute; inset: 0; width: 100%; height: 100%; }
.minor, .major, .poly { fill: none; shape-rendering: crispEdges; }
.minor { stroke: #dedeed; }
.major { stroke: #c4c4df; }
.poly { stroke: #f0f; }
.axis { font: bold 13px "Open Sans", sans-serif; }
.x { fill: #f01010; }
.y { fill: #138d1b; }
.z { fill: #4568d8; }
.num { font: 12px "Liberation Sans", Arial, sans-serif; fill: #111; }
.mark { position: absolute; right: 16px; bottom: -5px; font: 19px/26px "Liberation Sans", "Noto Sans CJK SC", sans-serif; color: #888; opacity: .8; }
.ink { position: absolute; inset: 0; width: 100%; height: 100%; pointer-events: none; fill: none; stroke: #f50a0a; stroke-width: 2; stroke-linecap: round; stroke-linejoin: round; }
.pen { stroke-width: 6; }
</style>
